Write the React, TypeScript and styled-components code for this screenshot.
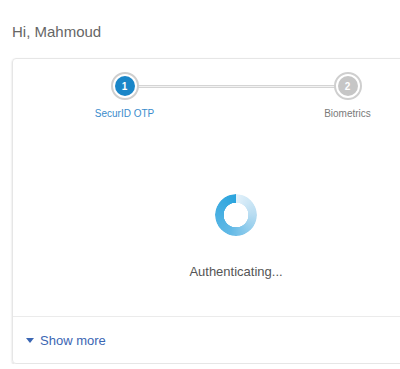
import React, { FC } from "react";
import styled, { createGlobalStyle } from "styled-components";

const GlobalStyle = createGlobalStyle`
  html, body {
    margin: 0;
    padding: 0;
    background: #ffffff;
    overflow: hidden;
    font-family: "Liberation Sans", Arial, sans-serif;
  }
`;

const Page = styled.div`
  padding: 23px 0 0 12px;
  width: 448px;
`;

const Greeting = styled.div`
  font-size: 15px;
  line-height: 18px;
  color: #666666;
  margin-bottom: 17px;
`;

const Card = styled.div`
  width: 448px;
  height: 306px;
  box-sizing: border-box;
  border: 1px solid #e6e6e6;
  border-radius: 4px;
  box-shadow: 0 1px 2px rgba(0, 0, 0, 0.18);
  display: flex;
  flex-direction: column;
`;

const Stepper = styled.div`
  position: relative;
  display: grid;
  grid-template-columns: 1fr 1fr;
  padding-top: 13px;
`;

const Track = styled.div`
  position: absolute;
  top: 26px;
  left: 25%;
  right: 25%;
  height: 3px;
  background: #f2f2f2;
  border-top: 1px solid #d4d4d4;
  border-bottom: 1px solid #d4d4d4;
  box-sizing: border-box;
`;

const Step = styled.div`
  position: relative;
  display: flex;
  flex-direction: column;
  align-items: center;
`;

const Ring = styled.div`
  width: 28px;
  height: 28px;
  box-sizing: border-box;
  border: 2px solid #cfcfcf;
  border-radius: 50%;
  background: #ffffff;
  display: flex;
  align-items: center;
  justify-content: center;
`;

const Dot = styled.div<{ $active: boolean }>`
  width: 20px;
  height: 20px;
  border-radius: 50%;
  background: ${(p) => (p.$active ? "#1a86c8" : "#c6c6c6")};
  color: #ffffff;
  font-size: 10px;
  font-weight: bold;
  display: flex;
  align-items: center;
  justify-content: center;
`;

const StepLabel = styled.div<{ $active: boolean }>`
  margin-top: 7px;
  font-size: 10px;
  line-height: 13px;
  color: ${(p) => (p.$active ? "#3a8ccc" : "#7a7a7a")};
`;

const Body = styled.div`
  flex: 1;
  display: flex;
  flex-direction: column;
  align-items: center;
  padding-top: 74px;
`;

const Spinner = styled.div`
  width: 42px;
  height: 42px;
  border-radius: 50%;
  background: conic-gradient(#e3f1fa 0deg, #b7dcf1 90deg, #62b9e6 200deg, #2aa4dd 359deg);
  -webkit-mask: radial-gradient(circle, transparent 12px, #000 12.5px);
  mask: radial-gradient(circle, transparent 12px, #000 12.5px);
`;

const Status = styled.div`
  margin-top: 28px;
  font-size: 13px;
  line-height: 16px;
  color: #555555;
`;

const Footer = styled.div`
  border-top: 1px solid #ebebeb;
  height: 46px;
  display: flex;
  align-items: center;
  padding-left: 13px;
  gap: 6px;
  color: #3b66b3;
  font-size: 13px;
`;

const Caret = styled.span`
  width: 0;
  height: 0;
  border-left: 4px solid transparent;
  border-right: 4px solid transparent;
  border-top: 5px solid #3b66b3;
`;

const steps = [
  { n: 1, label: "SecurID OTP", active: true },
  { n: 2, label: "Biometrics", active: false },
];

const App: FC = () => (
  <>
    <GlobalStyle />
    <Page>
      <Greeting>Hi, Mahmoud</Greeting>
      <Card>
        <Stepper>
          <Track />
          {steps.map((s) => (
            <Step key={s.n}>
              <Ring>
                <Dot $active={s.active}>{s.n}</Dot>
              </Ring>
              <StepLabel $active={s.active}>{s.label}</StepLabel>
            </Step>
          ))}
        </Stepper>
        <Body>
          <Spinner />
          <Status>Authenticating...</Status>
        </Body>
        <Footer>
          <Caret />
          Show more
        </Footer>
      </Card>
    </Page>
  </>
);

export default App;
